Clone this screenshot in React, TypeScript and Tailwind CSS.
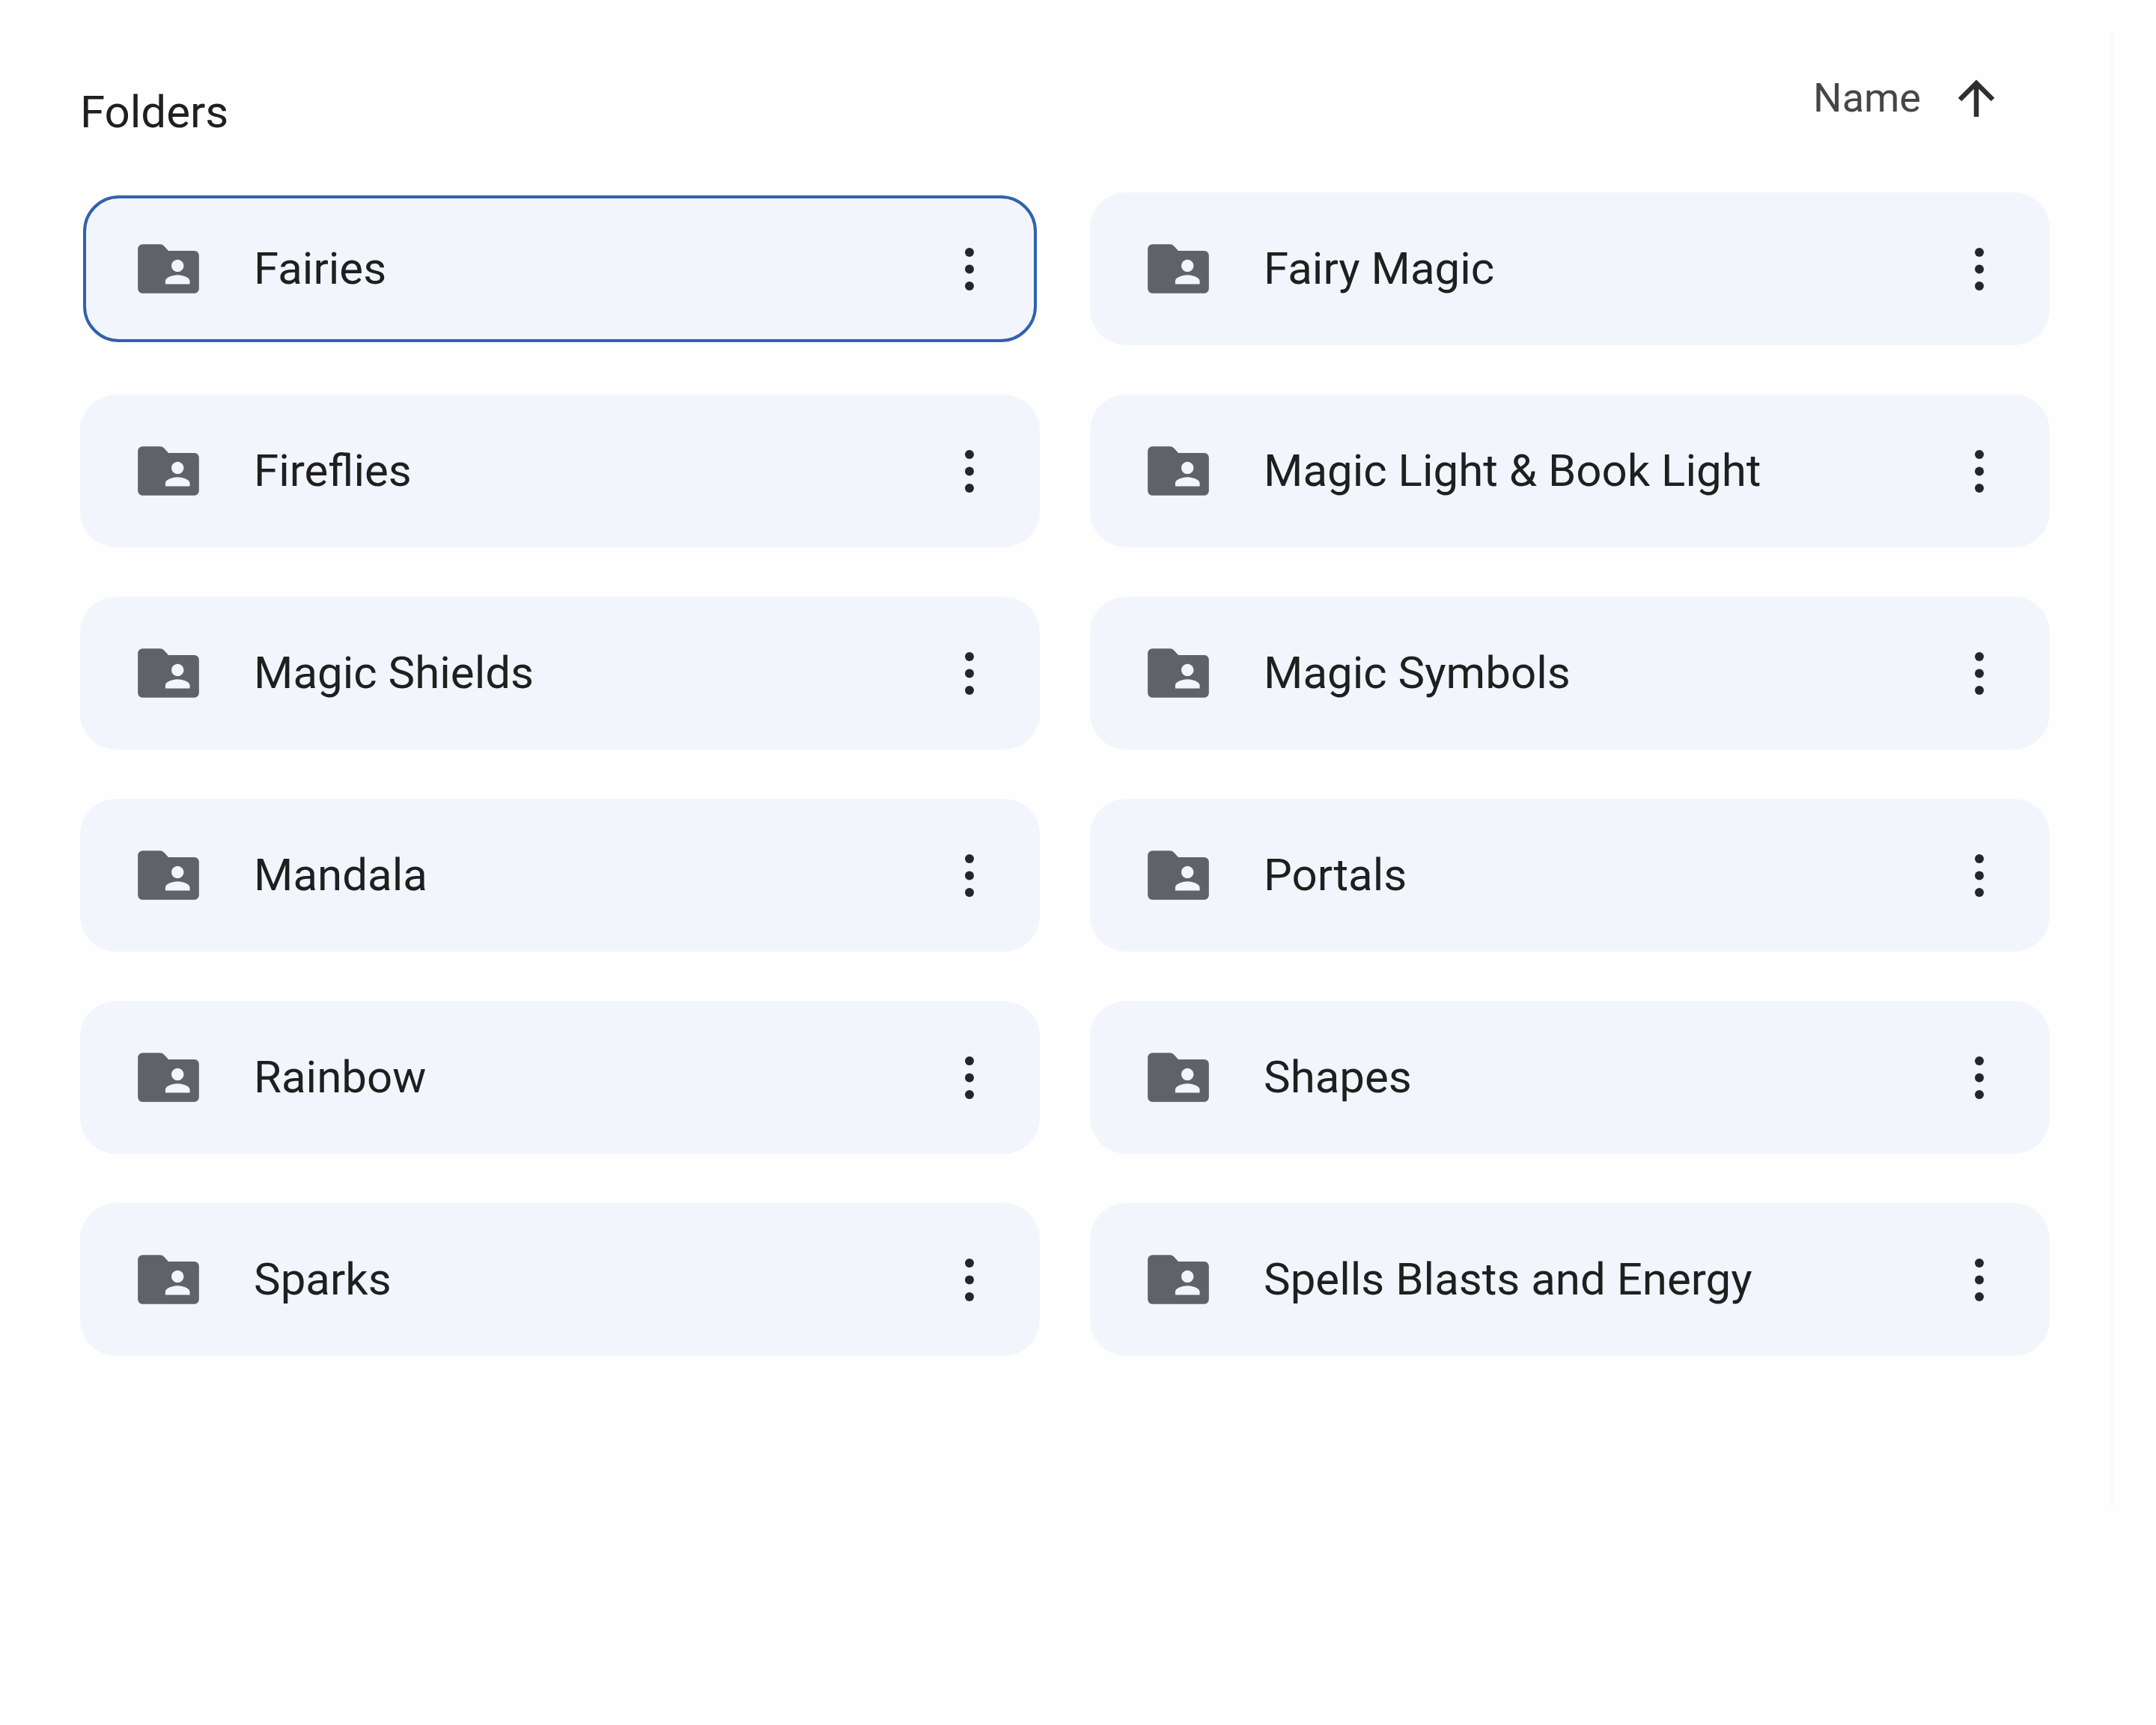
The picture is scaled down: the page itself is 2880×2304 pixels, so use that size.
const folders = [
  'Fairies',
  'Fairy Magic',
  'Fireflies',
  'Magic Light & Book Light',
  'Magic Shields',
  'Magic Symbols',
  'Mandala',
  'Portals',
  'Rainbow',
  'Shapes',
  'Sparks',
  'Spells Blasts and Energy',
];

function SharedFolderIcon() {
  return (
    <svg viewBox="0 0 24 24" className="size-[98px] shrink-0 fill-[#5f6368]" aria-hidden="true">
      <path d="M20.5 6.1H12L10.6 4.6C10.2 4.2 9.8 4 9.2 4H3.6C2.7 4 2 4.7 2 5.6V18.4C2 19.3 2.7 20 3.6 20H20.4C21.3 20 22 19.3 22 18.4V7.6C22 6.8 21.3 6.1 20.5 6.1ZM15 9C16.1 9 17 9.9 17 11S16.1 13 15 13 13 12.1 13 11 13.9 9 15 9ZM19 17H11V16C11 14.67 13.67 14 15 14S19 14.67 19 16V17Z" />
    </svg>
  );
}

function MoreIcon() {
  return (
    <svg viewBox="0 0 96 96" className="size-24 fill-[#24262a]" aria-hidden="true">
      <circle cx="48" cy="26" r="6" />
      <circle cx="48" cy="48.5" r="6" />
      <circle cx="48" cy="71" r="6" />
    </svg>
  );
}

function ArrowUpIcon() {
  return (
    <svg viewBox="0 0 50 50" className="size-[50px] fill-none stroke-[#303030]" strokeWidth="6.5" aria-hidden="true">
      <path d="M25 50V6M3 27L25 5L47 27" />
    </svg>
  );
}

function FolderCard({ name, selected }: { name: string; selected: boolean }) {
  return (
    <li className={selected ? 'flex p-1' : 'flex'}>
      <div
        className={
          selected
            ? 'flex min-w-0 flex-1 items-center rounded-[48px] border-4 border-[#2f62ad] bg-[#f2f5fc] pr-[38px] pl-[61px]'
            : 'flex h-[204px] min-w-0 flex-1 items-center rounded-[48px] bg-[#f2f5fc] pr-[46px] pl-[69px]'
        }
      >
        <button type="button" className="flex min-w-0 flex-1 items-center gap-[65px] text-left">
          <SharedFolderIcon />
          <span className="truncate text-[60px] leading-[80px] text-[#1f1f1f]">{name}</span>
        </button>
        <button type="button" aria-label={`More actions for ${name}`} className="shrink-0 rounded-full">
          <MoreIcon />
        </button>
      </div>
    </li>
  );
}

export default function App() {
  return (
    <div className="min-h-screen bg-[#fefefe] pt-11 pr-[57px] font-['Roboto',sans-serif]">
      <main className="border-r-4 border-[#f8f9fc] pr-[81px] pb-[200px] pl-[107px]">
        <header className="flex h-[213px] items-start justify-between">
          <h2 className="pt-[70px] text-[60px] leading-[72px] text-[#1f1f1f]">Folders</h2>
          <button type="button" className="flex items-center gap-[49px] pt-[55px] pr-[73px] text-[54px] leading-[64px] text-[#444746]">
            Name
            <ArrowUpIcon />
          </button>
        </header>
        <ul className="grid grid-cols-2 gap-x-[67px] gap-y-[66px]">
          {folders.map((name, index) => (
            <FolderCard key={name} name={name} selected={index === 0} />
          ))}
        </ul>
      </main>
    </div>
  );
}
